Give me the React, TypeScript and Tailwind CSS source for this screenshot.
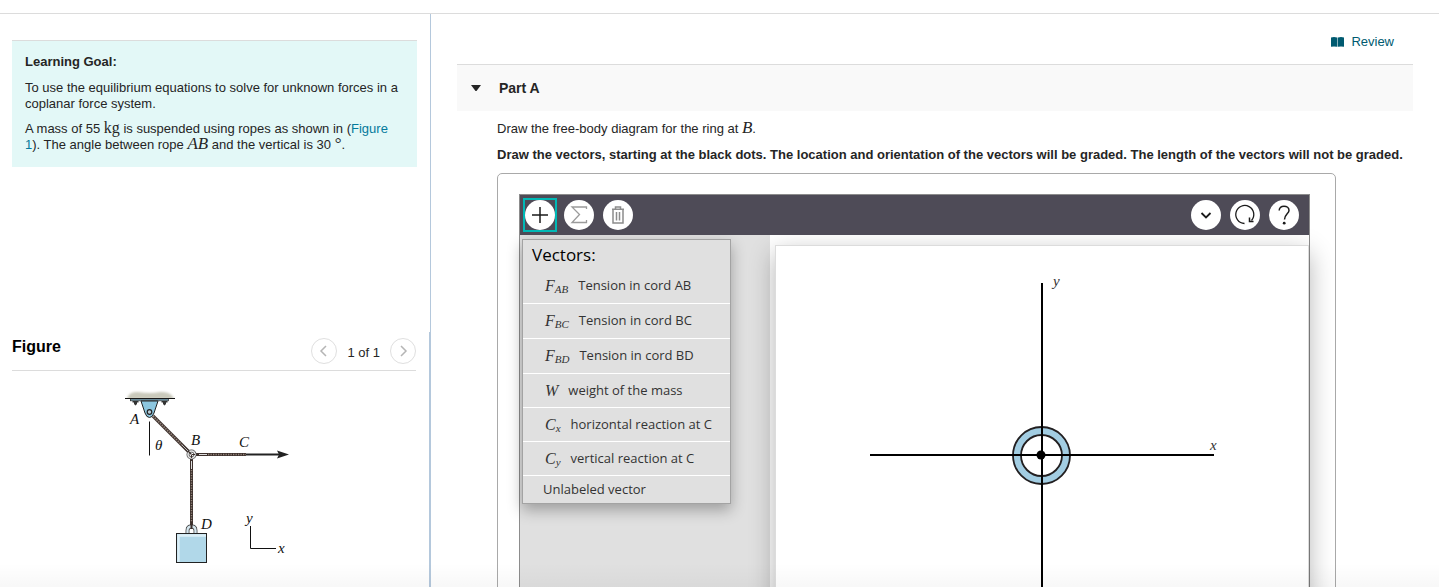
import React from "react";

const serif = "font-['Liberation_Serif',serif]";

const vectors = [
  { symbol: "F", sub: "AB", label: "Tension in cord AB" },
  { symbol: "F", sub: "BC", label: "Tension in cord BC" },
  { symbol: "F", sub: "BD", label: "Tension in cord BD" },
  { symbol: "W", sub: "", label: "weight of the mass" },
  { symbol: "C", sub: "x", label: "horizontal reaction at C" },
  { symbol: "C", sub: "y", label: "vertical reaction at C" },
];

function Sym({ children }: { children: React.ReactNode }) {
  return <i className={`${serif} text-[17px] leading-[10px]`}>{children}</i>;
}

function LearningGoal() {
  return (
    <section className="border-t border-[#dcdcdc] bg-[#e3f8f7] px-[13px] pt-[13px] pb-[14px] leading-4">
      <h2 className="font-bold">Learning Goal:</h2>
      <p className="mt-[10px]">
        To use the equilibrium equations to solve for unknown forces in a coplanar force system.
      </p>
      <p className="mt-[9px]">
        A mass of 55 <span className={`${serif} text-[16px] leading-[10px]`}>kg</span> is suspended using ropes as shown in (
        <a href="#figure" className="text-[#047a9c]">Figure 1</a>). The angle between rope <Sym>AB</Sym> and the
        vertical is 30 <span className={`${serif} text-[17px] leading-[10px]`}>°</span>.
      </p>
    </section>
  );
}

function RopeFigure() {
  return (
    <svg width="190" height="190" viewBox="110 380 190 190" role="img" aria-label="Mass suspended by ropes" className="block">
      <defs>
        <filter id="soft" x="-20%" y="-50%" width="140%" height="200%">
          <feGaussianBlur stdDeviation="1.3" />
        </filter>
        <clipPath id="above"><rect x="120" y="385" width="60" height="13.5" /></clipPath>
      </defs>
      <g clipPath="url(#above)">
        <path d="M127 399 Q129 391 138 392 Q150 394 160 392 Q171 391 174 399Z" fill="#c9c9bb" filter="url(#soft)" />
      </g>
      <path d="M125 398.5H175" stroke="#111" strokeWidth="1.2" />
      <rect x="130.500" y="399" width="38" height="1.800" fill="#8fc4dc" stroke="#222" strokeWidth=".7" />
      <path d="M132.500 401h6v1.500h-1.500v1.500l-1.500 1.500-1.500-1.500v-1.500h-1.500zM161.500 401h6v1.500h-1.500v1.500l-1.500 1.500-1.500-1.500v-1.500h-1.500z" fill="#333" />
      <path d="M141 401H158L154 413Q152.500 417.500 149.500 417.500T145 413Z" fill="#8cc6df" stroke="#222" />
      <circle cx="149.500" cy="412" r="2.300" fill="#b9cdd8" stroke="#222" strokeWidth="1.200" />
      <path d="M153 416L190 453" stroke="#3c302c" strokeWidth="3.200" />
      <path d="M153 416L182 445" stroke="#95857c" strokeWidth="1.600" strokeDasharray="1.500 1" />
      <path d="M182 445L189 452" stroke="#bbb" strokeWidth="1" />
      <path d="M149.500 421.500V455.500" stroke="#111" />
      <path d="M194 454.500H246" stroke="#3c302c" strokeWidth="3" />
      <path d="M208 454.500H246" stroke="#95857c" strokeWidth="1.400" strokeDasharray="1.300 1.200" />
      <path d="M199 454.500H207" stroke="#ddd" strokeWidth="1" />
      <path d="M246 454.500H280" stroke="#222" strokeWidth="2" />
      <path d="M277 450.500L289 454.500L277 458.500L279 454.500Z" fill="#222" />
      <path d="M191.500 458V527" stroke="#3c302c" strokeWidth="3" />
      <path d="M191.500 470V526" stroke="#95857c" strokeWidth="1.400" strokeDasharray="1.300 1.200" />
      <path d="M191.500 461V469" stroke="#ddd" strokeWidth="1" />
      <circle cx="191.500" cy="454.500" r="3.500" fill="#fff" stroke="#555" strokeWidth="3" />
      <circle cx="191.500" cy="454.500" r="3.500" fill="none" stroke="#e6e6e6" strokeWidth="1.500" />
      <path d="M188 451L191.500 454.500M195 454.500H192M191.500 458V455" stroke="#3c302c" strokeWidth="1.200" />
      <path d="M187.500 534V530.500Q187.500 526.500 191.500 526.500T195.500 530.500V534" fill="none" stroke="#333" strokeWidth="3.800" />
      <path d="M187.500 534V530.500Q187.500 526.500 191.500 526.500T195.500 530.500V534" fill="none" stroke="#d5e6ee" strokeWidth="2.400" />
      <path d="M191.500 522V529" stroke="#3c302c" strokeWidth="2" />
      <rect x="176.500" y="533.500" width="30" height="29" fill="#b1d8e9" stroke="#222" />
      <path d="M178.500 562V535.500H206" fill="none" stroke="#dceff7" strokeWidth="2.400" />
      <path d="M250.500 526V548.500H276" fill="none" stroke="#111" />
      <g className={`${serif} text-[15px] italic`} fill="#111">
        <text x="130" y="424">A</text>
        <text x="155" y="450">θ</text>
        <text x="191" y="445">B</text>
        <text x="239" y="447">C</text>
        <text x="201" y="529">D</text>
        <text x="246" y="523">y</text>
        <text x="278" y="553">x</text>
      </g>
    </svg>
  );
}

function PagerButton({ label, d }: { label: string; d: string }) {
  return (
    <button aria-label={label} className="flex size-[26px] items-center justify-center rounded-full border border-[#dfdfdf] bg-white">
      <svg width="12" height="12" viewBox="0 0 12 12" fill="none" stroke="#b5b5b5" strokeWidth="1.500">
        <path d={d} />
      </svg>
    </button>
  );
}

function FigurePanel() {
  return (
    <section id="figure" className="flex-1 border-r-2 border-[#b4c8dc] pr-[13px] pl-3">
      <header className="flex h-[39px] items-center border-b border-[#dcdcdc]">
        <h2 className="flex-1 pb-[9px] text-[16px] leading-5 font-bold text-black">Figure</h2>
        <div className="flex items-center gap-[10px]">
          <PagerButton label="Previous figure" d="M8 1L3 6L8 11" />
          <span className="pt-1">1 of 1</span>
          <PagerButton label="Next figure" d="M4 1L9 6L4 11" />
        </div>
      </header>
      <div className="flex justify-center pt-[9px] pr-[18px]">
        <RopeFigure />
      </div>
    </section>
  );
}

function ToolButton({ label, active, children }: { label: string; active?: boolean; children: React.ReactNode }) {
  return (
    <button
      aria-label={label}
      className={
        active
          ? "flex size-[34px] items-center justify-center border-2 border-[#00b8b5]"
          : "flex size-[34px] items-center justify-center border-2 border-transparent"
      }
    >
      <span className="flex size-[30px] items-center justify-center rounded-full bg-white">
        <svg width="30" height="30" viewBox="0 0 30 30" fill="none" stroke="#1b1b1b" strokeWidth="1.500">
          {children}
        </svg>
      </span>
    </button>
  );
}

function Toolbar() {
  return (
    <div className="relative z-10 flex h-10 items-center justify-between bg-[#4e4b57] pr-2 pl-[3px]">
      <div className="flex gap-[5px]">
        <ToolButton label="Add vector" active>
          <path d="M7 15H23M15 7V23" />
        </ToolButton>
        <ToolButton label="Vector sum">
          <path d="M22.500 9V7H8L15.500 14.500L8 22.500H22.500V20" stroke="#9b9b9b" strokeWidth="1.300" />
        </ToolButton>
        <ToolButton label="Delete">
          <path d="M9 9.200H21M12.500 9V7H17.500V9M10 9V23H20V9M13.500 12V20.500M16.500 12V20.500" stroke="#8c8c8c" strokeWidth="1.500" />
        </ToolButton>
      </div>
      <div className="flex gap-[5px]">
        <ToolButton label="More">
          <path d="M10.500 13L15 17.500L19.500 13" strokeWidth="1.800" />
        </ToolButton>
        <ToolButton label="Reset">
          <path d="M14.500 23.500A9 9 0 1 1 21.500 20.500" strokeWidth="1.300" />
          <path d="M19.500 17.500V21.500H23.500" strokeWidth="1.500" />
        </ToolButton>
        <ToolButton label="Help">
          <path d="M10.200 10.500C10.200 8 12.200 6.200 15 6.200S20 8 20 10.400C20 13.500 15.500 14.500 15.500 19.500" />
          <circle cx="15.200" cy="23.200" r="1.400" fill="#1b1b1b" stroke="none" />
        </ToolButton>
      </div>
    </div>
  );
}

function VectorMenu() {
  return (
    <div className="relative mt-1 ml-[2px] w-[209px] border border-[#a3a3a3] bg-[#e0e0e0] font-['Open_Sans',sans-serif] shadow-[0_6px_14px_rgba(0,0,0,0.3)]">
      <h3 className="h-[29px] pl-[9px] text-[17px] leading-[29px] text-black">Vectors:</h3>
      <ul>
        {vectors.map((v) => (
          <li key={v.label} className="border-b border-white">
            <button
              className={
                v.symbol === "F"
                  ? "flex h-[34px] w-full items-center gap-[10px] pl-[22px] text-left text-[13px] text-[#333]"
                  : "flex h-[33px] w-full items-center gap-[10px] pl-[22px] text-left text-[13px] text-[#333]"
              }
            >
              <span className={`${serif} text-[16px] leading-4 italic`}>
                {v.symbol}
                {v.sub && <sub className="bottom-[-2px] text-[11px]">{v.sub}</sub>}
              </span>
              {v.label}
            </button>
          </li>
        ))}
        <li>
          <button className="block h-[27px] w-full pl-5 text-left text-[13px] leading-[27px] text-[#333]">Unlabeled vector</button>
        </li>
      </ul>
    </div>
  );
}

function Diagram() {
  return (
    <svg width="400" height="418" viewBox="0 0 400 418" role="img" aria-label="Ring at B with x and y axes" className="block">
      <circle cx="199.500" cy="209.500" r="24.500" fill="none" stroke="#a2cde2" strokeWidth="9" />
      <circle cx="199.500" cy="209.500" r="28.500" fill="none" stroke="#231f20" strokeWidth="1.800" />
      <circle cx="199.500" cy="209.500" r="20.500" fill="none" stroke="#231f20" strokeWidth="1.800" />
      <path d="M28 209H372M200 37V381" stroke="#000" strokeWidth="2" />
      <circle cx="199" cy="209" r="4.500" fill="#000" />
      <g className={`${serif} text-[15px] italic`} fill="#333">
        <text x="211" y="40">y</text>
        <text x="368" y="204">x</text>
      </g>
    </svg>
  );
}

function DrawingTool() {
  return (
    <div className="border border-[#8c8c8c]">
      <Toolbar />
      <div className="flex h-[520px]">
        <div className="w-[250px] shrink-0 bg-[#e0e0e0]">
          <VectorMenu />
        </div>
        <div className="flex-1 pt-[10px] pl-[5px]">
          <div className="flex h-full justify-center border-x border-t border-[#dcdcdc] bg-white shadow-[0_8px_24px_rgba(0,0,0,0.3)]">
            <Diagram />
          </div>
        </div>
      </div>
    </div>
  );
}

export default function App() {
  return (
    <div className="relative flex h-screen flex-col overflow-hidden bg-white font-['Liberation_Sans',Arial,sans-serif] text-[13px] text-[#252525]">
      <div className="h-[14px] shrink-0 border-b border-[#dcdcdc]" />
      <div className="flex min-h-0 flex-1">
        <aside className="flex w-[431px] shrink-0 flex-col">
          <div className="h-[318px] shrink-0 border-r border-[#b4c8dc] pt-[26px] pr-[13px] pl-3">
            <LearningGoal />
          </div>
          <FigurePanel />
        </aside>
        <main className="min-w-0 flex-1 px-[26px]">
          <div className="flex h-[50px] items-center justify-end pt-[6px] pr-[19px]">
            <a href="#review" className="flex items-center gap-[7px] text-[#005a70]">
              <svg width="13" height="10" viewBox="0 0 13 10" fill="#005a70" aria-hidden="true">
                <path d="M0 .6Q3 -.4 6 .6V9.800Q3 9 0 9.800ZM7 .6Q10 -.4 13 .6V9.800Q10 9 7 9.800Z" />
                <path d="M6 .6H7V9.800H6Z" opacity=".45" />
              </svg>
              Review
            </a>
          </div>
          <button className="flex h-[47px] w-full items-center gap-[18px] border-t border-[#dcdcdc] bg-[#f9f9f9] pl-[14px] text-left text-[14px] font-bold">
            <svg width="10" height="6" viewBox="0 0 10 6" fill="#252525" aria-hidden="true">
              <path d="M0 0H10L5.500 6H4.500Z" />
            </svg>
            Part A
          </button>
          <div className="pl-10">
            <p className="mt-[9px] leading-[18px]">
              Draw the free-body diagram for the ring at <Sym>B</Sym>.
            </p>
            <p className="mt-2 leading-[18px] font-bold">
              Draw the vectors, starting at the black dots. The location and orientation of the vectors will be graded.
              The length of the vectors will not be graded.
            </p>
            <div className="mt-[9px] max-w-[839px] rounded-[5px] border border-[#a9a9a9] py-5 pr-[25px] pl-[21px]">
              <DrawingTool />
            </div>
          </div>
        </main>
      </div>
      <div className="pointer-events-none absolute inset-x-0 bottom-0 z-20 h-6 bg-linear-to-b from-transparent to-black/3" />
    </div>
  );
}
